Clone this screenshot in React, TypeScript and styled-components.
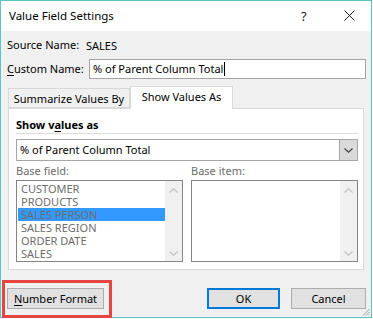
import React from 'react';
import styled, { createGlobalStyle } from 'styled-components';

const Global = createGlobalStyle`
  html, body { margin: 0; padding: 0; background: #ffffff; }
  body {
    font-family: "Noto Sans", "Open Sans", sans-serif;
    font-size: 11px;
    color: #000000;
  }
  * { box-sizing: border-box; }
`;

const Window = styled.div`
  position: relative;
  width: 372px;
  height: 318px;
  border: 1px solid #58c5c8;
  background: #f0f0f0;
  display: flex;
  flex-direction: column;
`;

const TitleBar = styled.div`
  height: 30px;
  flex-shrink: 0;
  background: #ffffff;
  display: flex;
  align-items: center;
  padding-left: 8px;
`;

const Title = styled.span`
  font-size: 11.5px;
  line-height: 16px;
`;

const TitleControls = styled.div`
  margin-left: auto;
  display: flex;
  align-items: center;
  height: 100%;
`;

const HelpGlyph = styled.span`
  font-size: 13px;
  line-height: 16px;
  width: 6px;
  margin-right: 37px;
  color: #1a1a1a;
`;

const CloseIcon = styled.svg`
  width: 11px;
  height: 11px;
  margin-right: 16px;
  margin-bottom: 1px;
`;

const Body = styled.div`
  flex: 1;
  display: flex;
  flex-direction: column;
  padding: 0 5px 0 6px;
`;

const FieldRow = styled.div<{ $top: number; $h: number }>`
  display: flex;
  align-items: center;
  height: ${p => p.$h}px;
  margin-top: ${p => p.$top}px;
`;

const Label = styled.span<{ $w: number }>`
  width: ${p => p.$w}px;
  flex-shrink: 0;
  line-height: 16px;
  white-space: nowrap;
`;

const Mn = styled.span`
  text-decoration: underline;
  text-underline-offset: 2px;
`;

const TextInput = styled.div`
  flex: 1;
  height: 20px;
  border: 1px solid #a3a3a3;
  background: #ffffff;
  display: flex;
  align-items: center;
  padding-left: 3px;
  line-height: 16px;
  white-space: nowrap;
`;

const Caret = styled.span`
  display: inline-block;
  width: 1px;
  height: 14px;
  background: #000000;
  margin-left: 1px;
`;

const TabStrip = styled.div`
  display: flex;
  align-items: flex-end;
  height: 22px;
  margin: 7px 0 0 1px;
  position: relative;
  z-index: 1;
`;

const Tab = styled.div<{ $active?: boolean; $w: number }>`
  width: ${p => p.$w}px;
  height: ${p => (p.$active ? 23 : 20)}px;
  margin-bottom: ${p => (p.$active ? -1 : 0)}px;
  border: 1px solid #d9d9d9;
  border-bottom: ${p => (p.$active ? 'none' : '1px solid #d9d9d9')};
  background: ${p => (p.$active ? '#ffffff' : '#f0f0f0')};
  display: flex;
  justify-content: center;
  align-items: flex-start;
  padding-top: ${p => (p.$active ? 2 : 2)}px;
  line-height: 16px;
  white-space: nowrap;
`;

const Panel = styled.div`
  height: 162px;
  margin: 0 2px 0 1px;
  border: 1px solid #d9d9d9;
  background: #ffffff;
  display: flex;
  flex-direction: column;
  padding: 8px 5px 7px 7px;
`;

const GroupTitle = styled.div`
  height: 16px;
  line-height: 16px;
  font-weight: 700;
`;

const Separator = styled.div`
  height: 1px;
  background: #dcdcdc;
`;

const Combo = styled.div`
  margin-top: 5px;
  height: 22px;
  border: 1px solid #a6a6a6;
  background: #ffffff;
  display: flex;
  align-items: stretch;
`;

const ComboText = styled.span`
  flex: 1;
  padding-left: 3px;
  line-height: 20px;
  white-space: nowrap;
`;

const ComboButton = styled.div`
  width: 18px;
  background: #dadada;
  border-left: 1px solid #a6a6a6;
  display: flex;
  align-items: center;
  justify-content: center;
`;

const Columns = styled.div`
  margin-top: 2px;
  display: grid;
  grid-template-columns: 167px 167px;
  column-gap: 8px;
`;

const Column = styled.div`
  display: flex;
  flex-direction: column;
`;

const DisabledLabel = styled.div`
  height: 16px;
  line-height: 16px;
  color: #6d6d6d;
  margin-bottom: 1px;
`;

const ListBox = styled.div`
  height: 82px;
  border: 1px solid #858585;
  background: #ffffff;
  display: flex;
`;

const ListItems = styled.div`
  flex: 1;
  padding: 1px 0 0 1px;
  display: flex;
  flex-direction: column;
`;

const ListItem = styled.div<{ $selected?: boolean }>`
  height: 13px;
  line-height: 13px;
  padding-left: 3px;
  color: #6d6d6d;
  background: ${p => (p.$selected ? '#3399ff' : 'transparent')};
  white-space: nowrap;
  overflow: hidden;
`;

const ScrollTrack = styled.div`
  width: 17px;
  background: #f0f0f0;
  display: flex;
  flex-direction: column;
  justify-content: space-between;
  align-items: center;
  padding: 7px 0 5px;
`;

const Buttons = styled.div`
  display: flex;
  align-items: flex-start;
  margin-top: 18px;
`;

const Button = styled.div<{ $w: number; $default?: boolean; $left?: number }>`
  width: ${p => p.$w}px;
  height: 21px;
  margin-left: ${p => p.$left ?? 0}px;
  border: ${p => (p.$default ? '2px solid #0078d7' : '1px solid #adadad')};
  background: #e1e1e1;
  display: flex;
  align-items: center;
  justify-content: center;
  line-height: 16px;
  white-space: nowrap;
`;

const Spacer = styled.div`
  flex: 1;
`;

const Highlight = styled.div`
  position: absolute;
  left: 1px;
  top: 279px;
  width: 110px;
  height: 38px;
  border: 3px solid #e5463f;
  pointer-events: none;
`;

const Grip = styled.svg`
  position: absolute;
  right: 1px;
  bottom: 1px;
  width: 8px;
  height: 8px;
`;

const Chevron = ({ up, color }: { up?: boolean; color: string }) => (
  <svg width="9" height="5" viewBox="0 0 9 5">
    <path
      d={up ? 'M0.5 4.5 L4.5 0.8 L8.5 4.5' : 'M0.5 0.5 L4.5 4.2 L8.5 0.5'}
      fill="none"
      stroke={color}
      strokeWidth="1.2"
    />
  </svg>
);

const fields = ['CUSTOMER', 'PRODUCTS', 'SALES PERSON', 'SALES REGION', 'ORDER DATE', 'SALES'];

export default function App() {
  return (
    <>
      <Global />
      <Window>
        <TitleBar>
          <Title>Value Field Settings</Title>
          <TitleControls>
            <HelpGlyph>?</HelpGlyph>
            <CloseIcon viewBox="0 0 11 11">
              <path d="M0.5 0.5 L10.5 10.5 M10.5 0.5 L0.5 10.5" stroke="#1a1a1a" strokeWidth="1" fill="none" />
            </CloseIcon>
          </TitleControls>
        </TitleBar>
        <Body>
          <FieldRow $top={6} $h={16}>
            <Label $w={79}>Source Name:</Label>
            <span>SALES</span>
          </FieldRow>
          <FieldRow $top={6} $h={20}>
            <Label $w={82}>
              <Mn>C</Mn>ustom Name:
            </Label>
            <TextInput>
              % of Parent Column Total
              <Caret />
            </TextInput>
          </FieldRow>
          <TabStrip>
            <Tab $w={122}>Summarize Values By</Tab>
            <Tab $w={103} $active>
              Show Values As
            </Tab>
          </TabStrip>
          <Panel>
            <GroupTitle>
              Show v<Mn>a</Mn>lues as
            </GroupTitle>
            <Separator />
            <Combo>
              <ComboText>% of Parent Column Total</ComboText>
              <ComboButton>
                <Chevron color="#404040" />
              </ComboButton>
            </Combo>
            <Columns>
              <Column>
                <DisabledLabel>Base field:</DisabledLabel>
                <ListBox>
                  <ListItems>
                    {fields.map(f => (
                      <ListItem key={f} $selected={f === 'SALES PERSON'}>
                        {f}
                      </ListItem>
                    ))}
                  </ListItems>
                  <ScrollTrack>
                    <Chevron up color="#c2c2c2" />
                    <Chevron color="#c2c2c2" />
                  </ScrollTrack>
                </ListBox>
              </Column>
              <Column>
                <DisabledLabel>Base item:</DisabledLabel>
                <ListBox>
                  <ListItems />
                  <ScrollTrack>
                    <Chevron up color="#c2c2c2" />
                    <Chevron color="#c2c2c2" />
                  </ScrollTrack>
                </ListBox>
              </Column>
            </Columns>
          </Panel>
          <Buttons>
            <Button $w={97}>
              <span>
                <Mn>N</Mn>umber Format
              </span>
            </Button>
            <Spacer />
            <Button $w={73} $default>
              OK
            </Button>
            <Button $w={75} $left={11}>
              Cancel
            </Button>
          </Buttons>
        </Body>
        <Highlight />
        <Grip viewBox="0 0 8 8">
          <path d="M7.5 1 L1 7.5 M7.5 4 L4 7.5 M7.5 6.5 L6.5 7.5" stroke="#a0a0a0" strokeWidth="1" />
        </Grip>
      </Window>
    </>
  );
}
